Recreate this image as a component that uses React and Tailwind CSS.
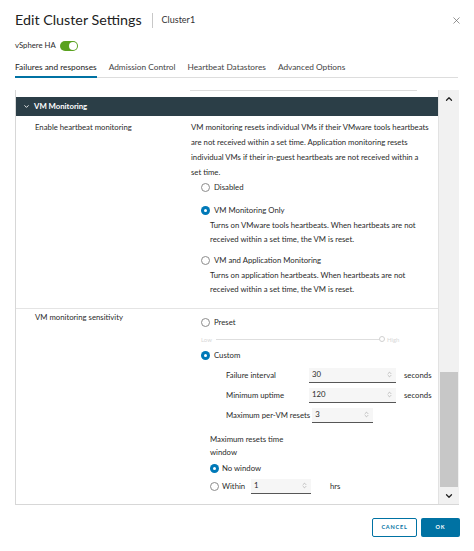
import { X, ChevronDown, ChevronUp, ChevronsUpDown } from "lucide-react";

function Radio({ checked }) {
  return checked ? (
    <span className="w-[9px] h-[9px] rounded-full bg-[#0079b8] flex items-center justify-center shrink-0">
      <span className="w-[3px] h-[3px] rounded-full bg-white" />
    </span>
  ) : (
    <span className="w-[9px] h-[9px] rounded-full border border-[#8c8c8c] bg-white shrink-0" />
  );
}

function Spin() {
  return (
    <ChevronsUpDown className="w-[7px] h-[7px] text-[#9a9a9a]" strokeWidth={2} />
  );
}

function NumInput({ value, width }) {
  return (
    <div
      className={`${width} shrink-0 h-[15px] bg-[#f6f6f6] border-b border-[#565656] flex items-center justify-between pl-[3px] pr-[3px]`}
    >
      <span>{value}</span>
      <Spin />
    </div>
  );
}

export default function App() {
  const options = [
    { label: "Disabled", checked: false, mt: "mt-0" },
    {
      label: "VM Monitoring Only",
      checked: true,
      mt: "mt-[8px]",
      desc: [
        "Turns on VMware tools heartbeats. When heartbeats are not",
        "received within a set time, the VM is reset.",
      ],
    },
    {
      label: "VM and Application Monitoring",
      checked: false,
      mt: "mt-[7px]",
      desc: [
        "Turns on application heartbeats. When heartbeats are not",
        "received within a set time, the VM is reset.",
      ],
    },
  ];

  const customRows = [
    { label: "Failure interval", value: "30", unit: "seconds", w: "w-[87px]" },
    { label: "Minimum uptime", value: "120", unit: "seconds", w: "w-[87px]" },
    { label: "Maximum per-VM resets", value: "3", unit: "", w: "w-[61px]" },
  ];

  return (
    <div className="w-[474px] h-[551px] bg-white px-[15px] pt-[10px] text-[7.75px] text-[#2a2a2a] font-['Lato','Open_Sans',sans-serif] overflow-hidden">
      {/* Title */}
      <div className="flex items-center h-[20px]">
        <span className="text-[14.3px] text-[#222] leading-[20px]">Edit Cluster Settings</span>
        <span className="w-px h-[15px] bg-[#c8c8c8] ml-[10px] mr-[9px]" />
        <span className="text-[9px] text-[#333]">Cluster1</span>
        <X className="ml-auto mr-[-3px] w-[11px] h-[11px] text-[#666]" strokeWidth={1.5} />
      </div>

      {/* vSphere HA */}
      <div className="flex items-center h-[14px] mt-[9px] gap-[4px]">
        <span>vSphere HA</span>
        <span className="w-[18px] h-[10px] rounded-full bg-[#5aa220] flex items-center justify-end pr-[1px]">
          <span className="w-[8px] h-[8px] rounded-full bg-white" />
        </span>
      </div>

      {/* Tabs */}
      <div className="flex mt-[8px] border-b border-[#ddd] mr-[1px] text-[8.3px]">
        <div className="pb-[3px] border-b-2 border-[#0072a3] text-[#222] leading-[12px] -mb-px">
          Failures and responses
        </div>
        <div className="ml-[12px] leading-[12px] text-[#444]">Admission Control</div>
        <div className="ml-[12px] leading-[12px] text-[#444]">Heartbeat Datastores</div>
        <div className="ml-[12px] leading-[12px] text-[#444]">Advanced Options</div>
      </div>

      {/* Scroll panel */}
      <div className="mt-[12px] h-[415px] flex border-b border-l border-[#d7d7d7]">
        <div className="flex-1 overflow-hidden border-r border-[#e2e2e2]">
          <div className="h-[7px]">
            <div className="ml-[174px] w-[227px] h-px bg-[#dcdcdc]" />
          </div>
          <div className="h-[19px] bg-[#2b3e47] flex items-center pl-[7px] gap-[4px] text-white font-bold">
            <ChevronDown className="w-[7px] h-[7px]" strokeWidth={3} />
            <span>VM Monitoring</span>
          </div>

          {/* Row 1 */}
          <div className="flex border-b border-[#e4e4e4] pb-[12px] leading-[15px]">
            <div className="w-[175px] pl-[19px] pt-[3.5px]">Enable heartbeat monitoring</div>
            <div className="flex-1 pt-[3.5px]">
              <div>
                VM monitoring resets individual VMs if their VMware tools heartbeats
                <br />
                are not received within a set time. Application monitoring resets
                <br />
                individual VMs if their in-guest heartbeats are not received within a
                <br />
                set time.
              </div>
              <div className="ml-[10px]">
                {options.map((o) => (
                  <div key={o.label} className={o.mt}>
                    <div className="flex items-center gap-[4px] h-[15px]">
                      <Radio checked={o.checked} />
                      <span>{o.label}</span>
                    </div>
                    {o.desc && (
                      <div className="ml-[9px] leading-[14px]">
                        {o.desc.map((d) => (
                          <div key={d}>{d}</div>
                        ))}
                      </div>
                    )}
                  </div>
                ))}
              </div>
            </div>
          </div>

          {/* Row 2 */}
          <div className="flex leading-[15px]">
            <div className="w-[175px] pl-[19px] pt-[1.5px]">VM monitoring sensitivity</div>
            <div className="flex-1 pt-[6.5px]">
              <div className="ml-[10px]">
                <div className="flex items-center gap-[4px] h-[15px]">
                  <Radio checked={false} />
                  <span>Preset</span>
                </div>
                <div className="flex items-center h-[18px] text-[#d8d8d8] text-[6px]">
                  <span>Low</span>
                  <span className="ml-[4px] w-[163px] h-px bg-[#dedede]" />
                  <span className="w-[6px] h-[6px] rounded-full border border-[#d0d0d0]" />
                  <span className="ml-[2px]">High</span>
                </div>
                <div className="flex items-center gap-[4px] h-[15px]">
                  <Radio checked={true} />
                  <span>Custom</span>
                </div>
                <div className="ml-[25px] mt-[2px]">
                  {customRows.map((r) => (
                    <div key={r.label} className="flex items-center h-[20px]">
                      <span className="min-w-[83px] pr-[2px] whitespace-nowrap">{r.label}</span>
                      <NumInput value={r.value} width={r.w} />
                      {r.unit && <span className="ml-[8px]">{r.unit}</span>}
                    </div>
                  ))}
                </div>
                <div className="ml-[9px] mt-[8px] leading-[13px]">
                  <div>Maximum resets time</div>
                  <div>window</div>
                  <div className="mt-[2px] flex items-center gap-[3px] h-[15px]">
                    <Radio checked={true} />
                    <span>No window</span>
                  </div>
                  <div className="flex items-center h-[20px]">
                    <Radio checked={false} />
                    <span className="ml-[3px] w-[29px]">Within</span>
                    <NumInput value="1" width="w-[60px]" />
                    <span className="ml-[19px]">hrs</span>
                  </div>
                </div>
              </div>
            </div>
          </div>
        </div>

        {/* Scrollbar */}
        <div className="w-[20px] bg-[#f1f1f1] flex flex-col">
          <div className="h-[18px] flex items-center justify-center">
            <ChevronUp className="w-[10px] h-[10px] text-[#222]" strokeWidth={3} />
          </div>
          <div className="flex-1 flex flex-col justify-end">
            <div className="h-[115px] mx-[1px] bg-[#c7c7c7]" />
          </div>
          <div className="h-[17px] flex items-center justify-center">
            <ChevronDown className="w-[10px] h-[10px] text-[#222]" strokeWidth={3} />
          </div>
        </div>
      </div>

      {/* Footer */}
      <div className="flex justify-end gap-[4px] mt-[13px] mr-[-1px]">
        <button className="w-[45px] h-[19px] border border-[#0072a3] rounded-[2px] text-[#0072a3] text-[5.5px] font-bold tracking-[0.8px]">
          CANCEL
        </button>
        <button className="w-[39px] h-[19px] bg-[#0072a3] rounded-[2px] text-white text-[5.5px] font-bold tracking-[0.8px]">
          OK
        </button>
      </div>
    </div>
  );
}
